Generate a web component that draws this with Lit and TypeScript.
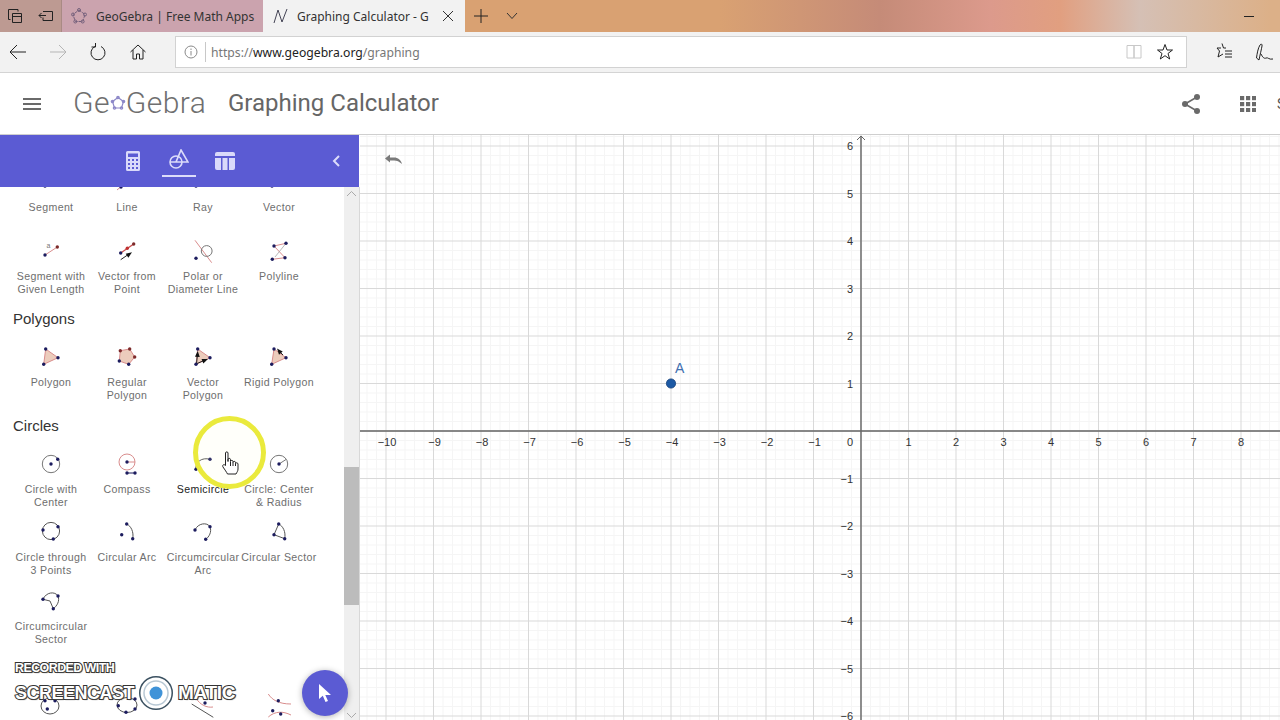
import { LitElement, html, css, svg } from 'lit';
import { customElement } from 'lit/decorators.js';

const BLUE = '#1c1c5e';
const RED = '#7c2a2a';
const PINK = '#d98d8d';

const pt = (x: number, y: number, c = BLUE) => svg`<circle cx=${x} cy=${y} r="1.7" fill=${c}></circle>`;
const ln = (d: string, c = PINK, w = 1) => svg`<path d=${d} fill="none" stroke=${c} stroke-width=${w}></path>`;
const arrow = (d: string, tipX: number, tipY: number, ang: number) => svg`
  <path d=${d} fill="none" stroke="#222" stroke-width="1"></path>
  <path d="M0 0L-6 -2.4L-6 2.4Z" fill="#111" transform="translate(${tipX} ${tipY}) rotate(${ang})"></path>`;

interface Tool {
  label?: string;
  icon: unknown;
  active?: boolean;
}

const lineTools: Tool[] = [
  { label: 'Segment', icon: svg`${ln('M10 20L22 12')}${pt(10, 20)}${pt(22, 12, RED)}` },
  { label: 'Line', icon: svg`${ln('M6 24L25 8')}${pt(10, 21)}` },
  { label: 'Ray', icon: svg`${ln('M9 20L26 10')}${pt(9, 20)}` },
  { label: 'Vector', icon: svg`${ln('M9 20L24 10', '#222')}${pt(9, 20)}` },
  {
    label: 'Segment with Given Length',
    icon: svg`${ln('M10 20L22.3 12')}<text x="11.5" y="13" font-size="7" fill="#777" font-family="Liberation Sans">a</text>${pt(10, 20)}${pt(22.3, 12, RED)}`,
  },
  {
    label: 'Vector from Point',
    icon: svg`${ln('M9.7 18L22.7 9', '#c85050', 1.4)}${pt(9.7, 18)}${pt(16.3, 13.3, '#c03030')}${pt(22.7, 9, RED)}${arrow('M9.7 24.7L18 19', 21, 17.3, -34)}`,
  },
  {
    label: 'Polar or Diameter Line',
    icon: svg`${ln('M8 5.3L24.7 27.7')}<circle cx="19.7" cy="16" r="5.4" fill="none" stroke="#777"></circle>${pt(9, 23.3)}`,
  },
  {
    label: 'Polyline',
    icon: svg`${ln('M23 8.3L11 11L22 22.7L9.3 24.3')}${ln('M23 8.3L12 22', '#999', 0.7)}${pt(11, 11)}${pt(23, 8.3)}${pt(22, 22.7)}${pt(9.3, 24.3)}`,
  },
];

const polygonTools: Tool[] = [
  {
    label: 'Polygon',
    icon: svg`<path d="M10.7 8L23 16.7L8.7 23.3Z" fill="#ecccbc" stroke=${PINK}></path>${pt(10.7, 8)}${pt(23, 16.7)}${pt(8.7, 23.3)}`,
  },
  {
    label: 'Regular Polygon',
    icon: svg`<path d="M9.3 9.7L18.7 8L23.7 16L17.7 23.3L8.3 20Z" fill="#ecccbc" stroke=${PINK}></path>${pt(9.3, 9.7, RED)}${pt(18.7, 8, RED)}${pt(23.7, 16, RED)}${pt(17.7, 23.3)}${pt(8.3, 20)}`,
  },
  {
    label: 'Vector\nPolygon',
    icon: svg`<path d="M10.7 8L23 16.7L9 23.3Z" fill="#ecccbc" stroke=${PINK}></path>${arrow('M9.5 23L10.4 14', 10.7, 10, -87)}${arrow('M9 23L17 19.5', 21, 18, -22)}${pt(10.7, 8)}${pt(23, 16.7)}${pt(9, 23.3)}`,
  },
  {
    label: 'Rigid Polygon',
    icon: svg`<path d="M11 8L23 16.7L8.7 23.3Z" fill="#ecccbc" stroke=${PINK}></path>${arrow('M20 14L16 10', 14, 7.5, -130)}${pt(11, 8)}${pt(23, 16.7)}${pt(8.7, 23.3)}`,
  },
];

const circleTools: Tool[] = [
  {
    label: 'Circle with Center',
    icon: svg`<circle cx="16" cy="16" r="8.7" fill="none" stroke="#777"></circle>${pt(16, 16)}${pt(22.7, 11.3)}`,
  },
  {
    label: 'Compass',
    icon: svg`<circle cx="16" cy="14" r="8" fill="none" stroke=${PINK}></circle>${ln('M16 14H24', PINK)}${ln('M16 25H24', BLUE)}${pt(16, 14)}${pt(16, 25)}${pt(24, 25)}`,
  },
  {
    label: 'Semicircle',
    active: true,
    icon: svg`${ln('M9 21.3C8 14 15 9 23 11.3', '#555')}${pt(9, 21.3)}${pt(23, 11.3)}`,
  },
  {
    label: 'Circle: Center & Radius',
    icon: svg`<circle cx="16" cy="16" r="8.7" fill="none" stroke="#777"></circle>${ln('M16 16L23 11.5', '#777')}${pt(16, 16)}`,
  },
  {
    label: 'Circle through 3 Points',
    icon: svg`<circle cx="16" cy="15" r="8.6" fill="none" stroke="#555"></circle>${pt(8, 14)}${pt(23, 10.7)}${pt(18.3, 23)}`,
  },
  {
    label: 'Circular Arc',
    icon: svg`${ln('M15.7 8C20 10 23 16 21.7 22.7', '#555')}${pt(10.7, 18.7)}${pt(15.7, 8)}${pt(21.7, 22.7)}`,
  },
  {
    label: 'Circumcircular Arc',
    icon: svg`${ln('M8 14C11 7 20 6 23 10.7C25 16 22 21 18.7 23.3', '#555')}${pt(8, 14)}${pt(23, 10.7)}${pt(18.7, 23.3)}`,
  },
  {
    label: 'Circular Sector',
    icon: svg`${ln('M21.7 22.7L11 18.7L15.7 8', '#555')}${ln('M15.7 8C20 10 23 16 21.7 22.7', '#555')}${pt(11, 18.7)}${pt(15.7, 8)}${pt(21.7, 22.7)}`,
  },
  {
    label: 'Circumcircular\nSector',
    icon: svg`${ln('M8 14.3C11 7 20 6 23 11C25 16 22 21 18.3 23.7L15 16L8 14.3', '#555')}${pt(8, 14.3)}${pt(23, 11)}${pt(18.3, 23.7)}`,
  },
];

// last row, only the tops of the icons show above the window edge
const conicTools: Tool[] = [
  {
    icon: svg`<ellipse cx="15" cy="15" rx="9" ry="8" fill="none" stroke="#555"></ellipse>${pt(10, 9.7)}${pt(20, 9.7)}${pt(12.3, 18)}`,
  },
  {
    icon: svg`<ellipse cx="16" cy="14" rx="10" ry="7.5" fill="none" stroke="#555"></ellipse>${pt(7.3, 14.7)}${pt(24, 8)}${pt(15, 21.3)}${pt(24, 18)}`,
  },
  {
    icon: svg`${ln('M4.7 13L26.3 26.3', '#555')}${ln('M9 7C13 14 20 17 26 16')}${pt(18, 12)}`,
  },
  {
    icon: svg`${ln('M5.3 3C9 9 16 13 28 13')}${ln('M5.3 26C12 20 20 20 28 24')}${pt(15.3, 9.7)}${pt(9.7, 19.7)}${pt(17.7, 23)}`,
  },
];

const ORIGIN_X = 501;
const ORIGIN_Y = 296;
const UNIT = 47.5;

@customElement('geo-graph')
class GeoGraph extends LitElement {
  static styles = css`
    :host {
      display: block;
      flex: 1;
      min-width: 0;
      background: #fff;
      position: relative;
      overflow: hidden;
    }
    svg {
      display: block;
    }
    .num {
      font: 11px 'Liberation Sans', sans-serif;
      fill: #333;
    }
    .undo {
      position: absolute;
      left: 22px;
      top: 16px;
    }
  `;

  render() {
    const W = 920;
    const H = 585;
    const minor = [];
    const major = [];
    const labels = [];
    for (let i = -60; i <= 60; i++) {
      const x = ORIGIN_X + (i * UNIT) / 5;
      const y = ORIGIN_Y + (i * UNIT) / 5;
      const list = i % 5 === 0 ? major : minor;
      const c = i % 5 === 0 ? '#d9d9d9' : '#f5f5f5';
      if (x >= 0 && x <= W) list.push(svg`<path d="M${x} 0V${H}" stroke=${c}></path>`);
      if (y >= 0 && y <= H) list.push(svg`<path d="M0 ${y}H${W}" stroke=${c}></path>`);
    }
    for (let n = -10; n <= 8; n++) {
      if (n === 0) continue;
      const t = n < 0 ? `\u2212${-n}` : `${n}`;
      const x = ORIGIN_X + n * UNIT + (n < 0 ? 1 : 0);
      labels.push(svg`<text class="num" x=${x} y="311" text-anchor="middle">${t}</text>`);
    }
    for (let n = -6; n <= 6; n++) {
      if (n === 0) continue;
      const t = n < 0 ? `\u2212${-n}` : `${n}`;
      labels.push(svg`<text class="num" x="493" y=${ORIGIN_Y - n * UNIT + 4} text-anchor="end">${t}</text>`);
    }
    return html`
      <svg width=${W} height=${H} viewBox="0 0 ${W} ${H}">
        ${minor}${major}
        <path d="M0 ${ORIGIN_Y}H${W}" stroke="#666" stroke-width="1.4"></path>
        <path d="M${ORIGIN_X} 1V${H}" stroke="#666" stroke-width="1.4"></path>
        <path d="M${ORIGIN_X - 4} 5L${ORIGIN_X} 1L${ORIGIN_X + 4} 5" fill="none" stroke="#666"></path>
        ${labels}
        <text class="num" x="490" y="311" text-anchor="middle">0</text>
        <circle cx="311" cy="248.5" r="4.6" fill="#1d5aa5" stroke="#123e78" stroke-width="0.8"></circle>
        <text x="315" y="238" font-size="14" font-family="Liberation Sans" fill="#3f6fb0">A</text>
      </svg>
      <svg class="undo" width="22" height="18" viewBox="0 0 22 18">
        <path d="M3 7.500L8 3.500V6.500H12C16 6.500 19 9 20 13C17 10.500 15 9.500 12 9.500H8V11.500Z" fill="#7a7a7a"></path>
      </svg>
    `;
  }
}

@customElement('app-root')
export class AppRoot extends LitElement {
  static styles = css`
    :host {
      display: flex;
      flex-direction: column;
      position: relative;
      width: 1280px;
      height: 720px;
      overflow: hidden;
      background: #fff;
      font-family: 'Liberation Sans', sans-serif;
    }

    /* browser chrome */
    .tabs {
      height: 32px;
      flex: none;
      display: flex;
      align-items: center;
      font: 12px 'Noto Sans', sans-serif;
      color: #333;
      background: linear-gradient(
        90deg,
        #d9a172 0,
        #d9a172 720px,
        #c58b78 880px,
        #dc9a8c 990px,
        #e19f80 1060px,
        #d5c0b5 1140px,
        #dcb088 1270px
      );
    }
    .win-tools {
      width: 62px;
      height: 32px;
      flex: none;
      display: flex;
      align-items: center;
      justify-content: space-around;
      background: #bd9a92;
      box-sizing: border-box;
      border-right: 1px solid #a98a84;
    }
    .tab {
      height: 32px;
      box-sizing: border-box;
      display: flex;
      align-items: center;
      white-space: nowrap;
      overflow: hidden;
      flex: none;
    }
    .tab.bg {
      width: 201px;
      padding-left: 9px;
      gap: 9px;
      background: #cba3ae;
    }
    .tab.on {
      width: 202px;
      padding-left: 10px;
      gap: 9px;
      background: #f2f2f2;
    }
    .tab.on span {
      width: 135px;
      overflow: hidden;
    }
    .tab.on svg:last-child {
      margin-left: 1px;
    }
    .newtab {
      display: flex;
      align-items: center;
      gap: 18px;
      padding-left: 9px;
    }
    .spacer {
      flex: 1;
    }
    .min {
      margin-right: 26px;
      width: 10px;
      height: 1px;
      background: #222;
    }
    .toolbar {
      height: 41px;
      flex: none;
      box-sizing: border-box;
      display: flex;
      align-items: center;
      background: #f2f2f2;
      border-bottom: 1px solid #d4d4d4;
      padding: 0 0 1px 8px;
    }
    .nav {
      display: flex;
      gap: 20px;
      width: 167px;
      flex: none;
    }
    .address {
      width: 1012px;
      height: 32px;
      flex: none;
      box-sizing: border-box;
      background: #fff;
      border: 1px solid #d2d2d2;
      display: flex;
      align-items: center;
      padding: 1px 12px 0 8px;
      font: 12.200px 'Noto Sans', sans-serif;
      color: #777;
    }
    .address .sep {
      width: 1px;
      height: 20px;
      background: #c8c8c8;
      margin: 0 5px 0 7px;
    }
    .address b {
      font-weight: 400;
      color: #222;
    }
    .address .end {
      display: flex;
      align-items: center;
      gap: 13px;
    }
    .right-tools {
      display: flex;
      gap: 21px;
      padding-left: 28px;
    }

    /* app header */
    .header {
      height: 61px;
      flex: none;
      display: flex;
      align-items: center;
      background: #fff;
      overflow: hidden;
    }
    .menu {
      margin-left: 23px;
      width: 18px;
      flex: none;
    }
    .logo {
      margin-left: 32px;
      display: flex;
      align-items: center;
      font: 300 30px Roboto, sans-serif;
      letter-spacing: 0.4px;
      color: #6f6f6f;
      width: 155px;
      flex: none;
      padding-bottom: 2px;
    }
    .title {
      font: 24px Roboto, sans-serif;
      color: #666;
      padding-bottom: 2px;
    }
    .share {
      margin-right: 40px;
      flex: none;
    }
    .grid {
      flex: none;
    }
    .sign {
      font: 14px Roboto, sans-serif;
      color: #555;
      margin-left: 21px;
      width: 3px;
      overflow: hidden;
      flex: none;
    }

    /* main */
    .main {
      flex: 1;
      min-height: 0;
      display: flex;
      border-top: 1px solid #cfcfcf;
    }
    .panel {
      width: 360px;
      flex: none;
      display: flex;
      flex-direction: column;
      position: relative;
      overflow: hidden;
      background: #fff;
    }
    .panel-head {
      height: 52px;
      flex: none;
      display: flex;
      align-items: center;
      background: #5b5bd3;
      position: relative;
      margin-right: 1px;
    }
    .head-gap {
      width: 110px;
      flex: none;
    }
    .head-tab {
      width: 46px;
      height: 52px;
      flex: none;
      display: flex;
      align-items: center;
      justify-content: center;
      box-sizing: border-box;
    }
    .head-tab.sel {
      border-bottom: 2px solid #dcdcfa;
      height: 42px;
      padding-top: 8px;
      width: 34px;
      margin: 0 6px;
      align-self: flex-start;
    }
    .chevron {
      margin-right: 19px;
    }
    .panel-body {
      flex: 1;
      min-height: 0;
      display: flex;
    }
    .scroller {
      flex: 1;
      min-width: 0;
      overflow: hidden;
      padding-left: 13px;
    }
    .content {
      margin-top: -21px;
    }
    h3 {
      margin: 6px 0 12px;
      height: 20px;
      line-height: 20px;
      font-size: 15px;
      font-weight: 400;
      color: #333;
    }
    .tool-grid {
      display: grid;
      grid-template-columns: repeat(4, 76px);
      grid-auto-rows: 68.500px;
    }
    .tool {
      display: flex;
      flex-direction: column;
      align-items: center;
      text-align: center;
    }
    .tool svg {
      width: 32px;
      height: 32px;
      flex: none;
    }
    .tool span {
      margin-top: 3px;
      font-size: 10.600px;
      line-height: 13.300px;
      letter-spacing: 0.35px;
      color: #6e6e6e;
      width: 80px;
      white-space: pre-line;
    }
    .tool.active span {
      color: #222;
    }
    .scrollbar {
      width: 15px;
      flex: none;
      display: flex;
      flex-direction: column;
      align-items: center;
      background: #efefef;
      border-right: 1px solid #d8d8d8;
    }
    .scroll-up {
      margin-top: 3px;
    }
    .scroll-down {
      margin-bottom: 1px;
    }
    .track {
      flex: 1;
    }
    .thumb {
      width: 100%;
      height: 138px;
      flex: none;
      background: #bcbcbc;
      margin-top: 270px;
    }

    /* overlays */
    .fab {
      position: absolute;
      left: 302px;
      top: 535px;
      width: 46px;
      height: 46px;
      border-radius: 50%;
      background: #5b5bd3;
      box-shadow: 0 1px 6px rgba(0, 0, 0, 0.3);
      display: flex;
      align-items: center;
      justify-content: center;
    }
    .ring {
      position: absolute;
      left: 193px;
      top: 416px;
      width: 73px;
      height: 73px;
      box-sizing: border-box;
      border-radius: 50%;
      border: 5px solid #eaea3c;
      background: rgba(255, 255, 210, 0.1);
    }
    .hand {
      position: absolute;
      left: 222px;
      top: 451px;
    }
    .mark {
      position: absolute;
      left: 15px;
      top: 661px;
      width: 225px;
      color: #fff;
      font-weight: 700;
      -webkit-text-stroke: 2px #333;
      paint-order: stroke fill;
      text-shadow: 1px 1px 1px #444;
      white-space: nowrap;
    }
    .mark .small {
      font-size: 12.500px;
      line-height: 15px;
      letter-spacing: -0.6px;
    }
    .mark .big {
      display: flex;
      align-items: center;
      font-size: 18px;
      letter-spacing: -0.5px;
    }
    .mark .dot {
      width: 34px;
      height: 34px;
      flex: none;
      margin: 0 5px;
    }
    .mark .big span:last-child {
      font-size: 19px;
      letter-spacing: -0.3px;
    }
  `;

  private tool(t: Tool) {
    return html`<div class="tool ${t.active ? 'active' : ''}">
      <svg viewBox="0 0 32 32">${t.icon}</svg>
      ${t.label ? html`<span>${t.label}</span>` : ''}
    </div>`;
  }

  private toolGrid(tools: Tool[]) {
    return html`<div class="tool-grid">${tools.map((t) => this.tool(t))}</div>`;
  }

  render() {
    return html`
      <div class="tabs">
        <div class="win-tools">
          <svg width="16" height="16" viewBox="0 0 16 16" fill="none" stroke="#222">
            <path d="M5.500 5.500H14.500V14.500H5.500ZM5.500 8.500H14.500M3.500 11.500H1.500V2V1.500H11V3.500"></path>
          </svg>
          <svg width="16" height="16" viewBox="0 0 16 16" fill="none" stroke="#222">
            <path d="M5 3.500H14.500V12.500H5V9.500M1 7.500H8M3.500 5L1 7.500L3.500 10"></path>
          </svg>
        </div>
        <div class="tab bg">
          <svg width="16" height="16" viewBox="0 0 16 16" fill="none" stroke="#75607c">
            <path d="M8 2L14 6.500L11.700 13.500H4.300L2 6.500Z" stroke-dasharray="3 1"></path>
            <circle cx="8" cy="2" r="1.500"></circle><circle cx="14" cy="6.500" r="1.500"></circle>
            <circle cx="11.700" cy="13.500" r="1.500"></circle><circle cx="4.300" cy="13.500" r="1.500"></circle>
            <circle cx="2" cy="6.500" r="1.500"></circle>
          </svg>
          <span>GeoGebra | Free Math Apps</span>
        </div>
        <div class="tab on">
          <svg width="15" height="16" viewBox="0 0 15 16" fill="none" stroke="#445">
            <path d="M1 15L5 2L9 14L14 1"></path>
          </svg>
          <span>Graphing Calculator - G</span>
          <svg width="12" height="12" viewBox="0 0 12 12" fill="none" stroke="#333">
            <path d="M1 1L11 11M11 1L1 11"></path>
          </svg>
        </div>
        <div class="newtab">
          <svg width="14" height="14" viewBox="0 0 14 14" fill="none" stroke="#222"><path d="M7 0V14M0 7H14"></path></svg>
          <svg width="12" height="8" viewBox="0 0 12 8" fill="none" stroke="#333"><path d="M1 1L6 6.500L11 1"></path></svg>
        </div>
        <div class="spacer"></div>
        <div class="min"></div>
      </div>

      <div class="toolbar">
        <div class="nav">
          <svg width="20" height="20" viewBox="0 0 20 20" fill="none" stroke="#222"><path d="M2 10H18M9 3L2 10L9 17"></path></svg>
          <svg width="20" height="20" viewBox="0 0 20 20" fill="none" stroke="#b5b5b5"><path d="M2 10H18M11 3L18 10L11 17"></path></svg>
          <svg width="20" height="20" viewBox="0 0 20 20" fill="none" stroke="#222"><path d="M7 4.500A7 7 0 1 0 13 4.500M7.500 1L7.500 5L3.500 5"></path></svg>
          <svg width="20" height="20" viewBox="0 0 20 20" fill="none" stroke="#222"><path d="M2.500 10L10 3L17.500 10M5 8V17H8.500V12H11.500V17H15V8"></path></svg>
        </div>
        <div class="address">
          <svg width="14" height="14" viewBox="0 0 14 14" fill="none" stroke="#8a8a8a">
            <circle cx="7" cy="7" r="6"></circle><path d="M7 6V10.500M7 3.500V5"></path>
          </svg>
          <div class="sep"></div>
          <span>https://<b>www.geogebra.org</b>/graphing</span>
          <div class="spacer"></div>
          <div class="end">
            <svg width="18" height="16" viewBox="0 0 18 16" fill="none" stroke="#c8c8c8"><path d="M2 1.500H9V14H2ZM9 1.500H16V14H9Z"></path></svg>
            <svg width="18" height="18" viewBox="0 0 18 18" fill="none" stroke="#222"><path d="M9 1.500L11 7H16.500L12 10.500L13.700 16L9 12.700L4.300 16L6 10.500L1.500 7H7Z"></path></svg>
          </div>
        </div>
        <div class="right-tools">
          <svg width="18" height="18" viewBox="0 0 18 18" fill="none" stroke="#222"><path d="M7 1.500L8.500 6H11M2 6H6M4.500 9L2 6M4.500 9L3 15L8 12M10 9H17M10 12H17M10 15H17"></path></svg>
          <svg width="20" height="20" viewBox="0 0 20 20" fill="none" stroke="#222"><path d="M5 18L2.500 16C3 12 4 6 6 3C7 1.500 8.500 2 8 4C7.500 7 6 13 5 18ZM7 12C8.500 15 10 17 12 16C14 15 15 18 19 17"></path></svg>
        </div>
      </div>

      <div class="header">
        <svg class="menu" width="18" height="14" viewBox="0 0 18 14" fill="none" stroke="#6a6a6a" stroke-width="2"><path d="M0 2H18M0 7H18M0 12H18"></path></svg>
        <div class="logo">
          <span>Ge</span>
          <svg width="16" height="16" viewBox="0 0 16 16" fill="none" stroke="#8d88c8" stroke-width="1.200">
            <path d="M8 2.500L13.500 6.500L11.500 13H4.500L2.500 6.500Z"></path>
            <circle cx="8" cy="2.500" r="1.200"></circle><circle cx="13.500" cy="6.500" r="1.200"></circle>
            <circle cx="11.500" cy="13" r="1.200"></circle><circle cx="4.500" cy="13" r="1.200"></circle>
            <circle cx="2.500" cy="6.500" r="1.200"></circle>
          </svg>
          <span>Gebra</span>
        </div>
        <div class="title">Graphing Calculator</div>
        <div class="spacer"></div>
        <svg class="share" width="18" height="20" viewBox="0 0 18 20" fill="#6a6a6a">
          <circle cx="3" cy="10" r="3"></circle><circle cx="15" cy="3" r="3"></circle><circle cx="15" cy="17" r="3"></circle>
          <path d="M3 10L15 3M3 10L15 17" stroke="#6a6a6a" stroke-width="1.600"></path>
        </svg>
        <svg class="grid" width="16" height="16" viewBox="0 0 16 16" fill="#6a6a6a">
          ${[0, 6, 12].map((y) => [0, 6, 12].map((x) => svg`<rect x=${x} y=${y} width="4.200" height="4.200"></rect>`))}
        </svg>
        <div class="sign">S</div>
      </div>

      <div class="main">
        <div class="panel">
          <div class="panel-head">
            <div class="head-gap"></div>
            <div class="head-tab">
              <svg width="14" height="20" viewBox="0 0 14 20" fill="#d9d9fa">
                <path fill-rule="evenodd" d="M1.500 0H12.500A1.500 1.500 0 0 1 14 1.500V18.500A1.500 1.500 0 0 1 12.500 20H1.500A1.500 1.500 0 0 1 0 18.500V1.500A1.500 1.500 0 0 1 1.500 0ZM2 2.500V6H12V2.500ZM2 8V10H4V8ZM6 8V10H8V8ZM10 8V10H12V8ZM2 12V14H4V12ZM6 12V14H8V12ZM10 12V14H12V12ZM2 16V18H4V16ZM6 16V18H8V16ZM10 16V18H12V16Z"></path>
              </svg>
            </div>
            <div class="head-tab sel">
              <svg width="20" height="20" viewBox="0 0 20 20" fill="none" stroke="#dcdcfa" stroke-width="1.600">
                <circle cx="7" cy="13" r="6"></circle><path d="M12 1L19 13H7ZM1 13H13"></path>
              </svg>
            </div>
            <div class="head-tab">
              <svg width="20" height="18" viewBox="0 0 20 18" fill="#d9d9fa">
                <path d="M0 2A2 2 0 0 1 2 0H18A2 2 0 0 1 20 2V4H0ZM0 6H6V18H2A2 2 0 0 1 0 16ZM7.500 6H12.500V18H7.500ZM14 6H20V16A2 2 0 0 1 18 18H14Z"></path>
              </svg>
            </div>
            <div class="spacer"></div>
            <svg class="chevron" width="8" height="12" viewBox="0 0 8 12" fill="none" stroke="#dcdcfa" stroke-width="2"><path d="M7 1L2 6L7 11"></path></svg>
          </div>
          <div class="panel-body">
            <div class="scroller">
              <div class="content">
                ${this.toolGrid(lineTools)}
                <h3>Polygons</h3>
                ${this.toolGrid(polygonTools)}
                <h3>Circles</h3>
                ${this.toolGrid(circleTools)}
                <h3></h3>
                ${this.toolGrid(conicTools)}
              </div>
            </div>
            <div class="scrollbar">
              <svg class="scroll-up" width="11" height="7" viewBox="0 0 11 7" fill="none" stroke="#aaa"><path d="M1 6L5.500 1.500L10 6"></path></svg>
              <div class="thumb"></div>
              <div class="track"></div>
              <svg class="scroll-down" width="11" height="7" viewBox="0 0 11 7" fill="none" stroke="#aaa"><path d="M1 1L5.500 5.500L10 1"></path></svg>
            </div>
          </div>
          <div class="fab">
            <svg width="14" height="20" viewBox="0 0 14 20" fill="#fff"><path d="M1 1V16L4.800 12.800L7.500 19L10 18L7.300 12H13Z"></path></svg>
          </div>
        </div>
        <geo-graph></geo-graph>
      </div>

      <div class="ring"></div>
      <svg class="hand" width="19" height="24" viewBox="0 0 19 24" fill="#fff" stroke="#222" stroke-width="1">
        <path d="M3.500 2C3.500 0.500 6 0.500 6 2V10.500V8.500C6 7 8.500 7 8.500 8.500V10.500C8.500 9 11 9 11 10.500V11.500C11 10 13.500 10 13.500 11.500V12.500C13.500 11.500 16 11.500 16 13V18C16 20 15 21 14 23H5.500C4.500 21 3 19 1 16C0 14.500 1.500 12.500 3.500 14.500Z"></path>
        <path d="M8.500 11V15M11 11.500V15M13.500 12.500V15" fill="none"></path>
      </svg>

      <div class="mark">
        <div class="small">RECORDED WITH</div>
        <div class="big">
          <span>SCREENCAST</span>
          <svg class="dot" viewBox="0 0 34 34">
            <circle cx="17" cy="17" r="15.500" fill="#fff" stroke="#3a5060" stroke-width="3"></circle>
            <circle cx="17" cy="17" r="12" fill="none" stroke="#b8c8d4" stroke-width="1.500"></circle>
            <circle cx="17" cy="17" r="6.500" fill="#3f93d8"></circle>
          </svg>
          <span>MATIC</span>
        </div>
      </div>
    `;
  }
}

export { GeoGraph };
